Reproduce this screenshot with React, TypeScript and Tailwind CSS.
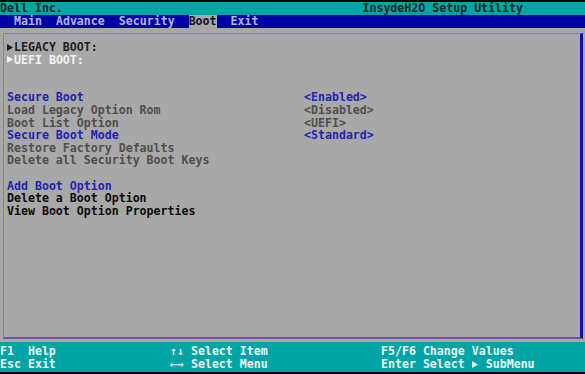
const mono = { fontFamily: '"DejaVu Sans Mono", "Liberation Mono", monospace' };

const tabs = ['Main', 'Advance', 'Security', 'Boot', 'Exit'];

type Row = {
    label: string;
    value?: string;
    tone: 'blue' | 'gray' | 'black' | 'white' | 'dark' | 'none';
    arrow?: boolean;
};

const rows: Row[] = [
    { label: 'LEGACY BOOT:', tone: 'dark', arrow: true },
    { label: 'UEFI BOOT:', tone: 'white', arrow: true },
    { label: '', tone: 'none' },
    { label: '', tone: 'none' },
    { label: 'Secure Boot', value: '<Enabled>', tone: 'blue' },
    { label: 'Load Legacy Option Rom', value: '<Disabled>', tone: 'gray' },
    { label: 'Boot List Option', value: '<UEFI>', tone: 'gray' },
    { label: 'Secure Boot Mode', value: '<Standard>', tone: 'blue' },
    { label: 'Restore Factory Defaults', tone: 'gray' },
    { label: 'Delete all Security Boot Keys', tone: 'gray' },
    { label: '', tone: 'none' },
    { label: 'Add Boot Option', tone: 'blue' },
    { label: 'Delete a Boot Option', tone: 'black' },
    { label: 'View Boot Option Properties', tone: 'black' },
];

const toneClass = {
    blue: 'text-[#2222b4]',
    gray: 'text-[#4e4e4e]',
    black: 'text-[#0a0a0a]',
    white: 'text-[#f4f4f4]',
    dark: 'text-[#1e1e1e]',
    none: '',
};

function Tri() {
    return (
        <span className="inline-flex w-[7px] items-center justify-start">
            <svg width="6" height="7" viewBox="0 0 6 7">
                <path d="M0 0 L6 3.5 L0 7 Z" fill="currentColor" />
            </svg>
        </span>
    );
}

export default function App() {
    return (
        <div
            className="w-[585px] h-[374px] flex flex-col bg-black overflow-hidden text-[11.6px] font-bold"
            style={mono}
        >
            {/* title strip */}
            <div className="mt-[2px] h-[13px] bg-[#00a4a4] flex items-center justify-between pr-[62px] text-[#102828] leading-[13px]">
                <span>Dell Inc.</span>
                <span>InsydeH2O Setup Utility</span>
            </div>

            {/* tab bar */}
            <div className="h-[13px] bg-[#0000a4] flex items-center pl-[14px] gap-[14px] leading-[13px]">
                {tabs.map((t) =>
                    t === 'Boot' ? (
                        <span key={t} className="bg-[#a8a8a8] text-[#141428] h-[13px]">
                            {t}
                        </span>
                    ) : (
                        <span key={t} className="text-[#b4b4ec]">
                            {t}
                        </span>
                    )
                )}
            </div>

            {/* main area */}
            <div className="flex-1 bg-[#a8a8a8] pt-[5px] pl-[3px] pr-[2px] pb-[3px] flex">
                <div className="flex-1 border-t border-l border-t-[#7c7cd4] border-l-[#7c7cd4] border-r-[3px] border-r-[#1010a0] border-b-2 border-b-[#5a5aa8] pt-[7px] pl-[3px]">
                    {rows.map((r, i) => (
                        <div key={i} className={`h-[12.6px] leading-[12.6px] flex items-center whitespace-pre ${toneClass[r.tone]}`}>
                            <span className="w-[297px] flex items-center">
                                {r.arrow && <Tri />}
                                {r.label}
                            </span>
                            {r.value && <span>{r.value}</span>}
                        </div>
                    ))}
                </div>
            </div>

            {/* footer */}
            <div className="h-[30px] bg-[#00a4a4] pt-[3px] text-[#eef6f6] leading-[13px] grid grid-cols-[170px_211px_1fr] whitespace-pre">
                <div className="flex flex-col">
                    <span>F1  Help</span>
                    <span>Esc Exit</span>
                </div>
                <div className="flex flex-col">
                    <span>{'\u2191\u2193 Select Item'}</span>
                    <span>{'\u2190\u2192 Select Menu'}</span>
                </div>
                <div className="flex flex-col">
                    <span>F5/F6 Change Values</span>
                    <span className="flex items-center">
                        {'Enter Select '}
                        <Tri />
                        {' SubMenu'}
                    </span>
                </div>
            </div>
            <div className="h-[2px] bg-black" />
        </div>
    );
}
